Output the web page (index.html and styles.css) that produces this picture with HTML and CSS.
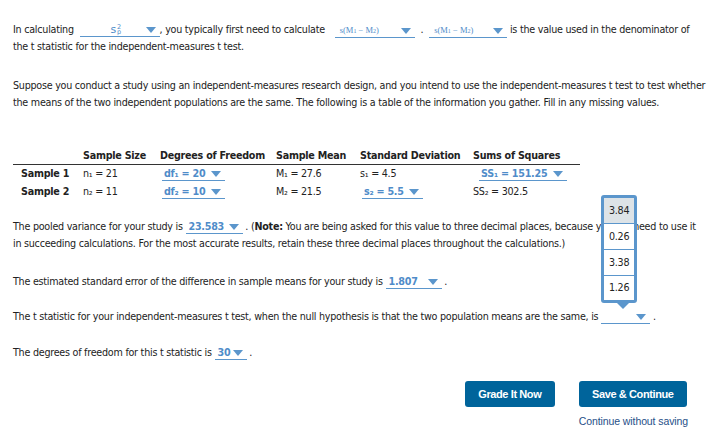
FILE: index.html
```html
<!DOCTYPE html>
<html>
<head>
<meta charset="utf-8">
<link rel="stylesheet" href="styles.css">
</head>
<body>
<div class="page">
  <p class="para first">In calculating <span class="dd w80 ml"><span class="val sp"><span class="s">s</span><span class="supsub"><span class="sup">2</span><span class="sub">p</span></span></span><span class="caret"></span></span>, you typically first need to calculate <span class="dd w80 ml2"><span class="val serif">s(M<small>1</small> &minus; M<small>2</small>)</span><span class="caret"></span></span> <span class="dot">.</span> <span class="dd w78"><span class="val serif">s(M<small>1</small> &minus; M<small>2</small>)</span><span class="caret"></span></span> is the value used in the denominator of<br>the t statistic for the independent-measures t test.</p>

  <p class="para second">Suppose you conduct a study using an independent-measures research design, and you intend to use the independent-measures t test to test whether<br>the means of the two independent populations are the same. The following is a table of the information you gather. Fill in any missing values.</p>

  <table class="data">
    <thead>
      <tr>
        <th class="c0"></th>
        <th class="c1">Sample Size</th>
        <th class="c2">Degrees of Freedom</th>
        <th class="c3">Sample Mean</th>
        <th class="c4">Standard Deviation</th>
        <th class="c5">Sums of Squares</th>
      </tr>
    </thead>
    <tbody>
      <tr>
        <td class="rowh">Sample 1</td>
        <td>n&#8321; = 21</td>
        <td><span class="dd tb w63"><span class="val">df&#8321; = 20</span><span class="caret"></span></span></td>
        <td>M&#8321; = 27.6</td>
        <td>s&#8321; = 4.5</td>
        <td><span class="dd tb w88 ss"><span class="val">SS&#8321; = 151.25</span><span class="caret"></span></span></td>
      </tr>
      <tr>
        <td class="rowh">Sample 2</td>
        <td>n&#8322; = 11</td>
        <td><span class="dd tb w63"><span class="val">df&#8322; = 10</span><span class="caret"></span></span></td>
        <td>M&#8322; = 21.5</td>
        <td><span class="dd tb w61"><span class="val">s&#8322; = 5.5</span><span class="caret"></span></span></td>
        <td>SS&#8322; = 302.5</td>
      </tr>
    </tbody>
  </table>

  <p class="para pooled">The pooled variance for your study is <span class="dd w57"><span class="val">23.583</span><span class="caret"></span></span> . (<b>Note:</b> You are being asked for this value to three decimal places, because you will need to use it<br>in succeeding calculations. For the most accurate results, retain these three decimal places throughout the calculations.)</p>

  <p class="para se">The estimated standard error of the difference in sample means for your study is <span class="dd w56"><span class="val">1.807</span><span class="caret"></span></span> .</p>

  <p class="para tstat">The t statistic for your independent-measures t test, when the null hypothesis is that the two population means are the same, is <span class="dd w49 open"><span class="val">&nbsp;</span><span class="caret"></span><span class="menu"><span class="opt hl">3.84</span><span class="opt">0.26</span><span class="opt">3.38</span><span class="opt last">1.26</span><span class="tip"></span></span></span> .</p>

  <p class="para dfp">The degrees of freedom for this t statistic is <span class="dd w32"><span class="val">30</span><span class="caret"></span></span> .</p>

  <div class="actions">
    <button class="btn grade">Grade It Now</button>
    <div class="savecol">
      <button class="btn save">Save &amp; Continue</button>
      <a class="skip">Continue without saving</a>
    </div>
  </div>
</div>
</body>
</html>
```

FILE: styles.css
```css
html, body {
  margin: 0;
  padding: 0;
  background: #ffffff;
}
.page {
  padding: 21px 2px 0 13px;
  font-family: "DejaVu Sans", Verdana, sans-serif;
  font-size: 9.6px;
  color: #222222;
  letter-spacing: -0.25px;
  white-space: nowrap;
}
.para {
  margin: 0;
  line-height: 17px;
}
.para + .para {
  margin-top: 20px;
}
.para.first + .para.second {
  margin-top: 22px;
}
.para.pooled + .para.se {
  margin-top: 21px;
}
.para.se + .para.tstat {
  margin-top: 18px;
}
.para.tstat + .para.dfp {
  margin-top: 19px;
}

.dd {
  display: inline-flex;
  align-items: center;
  justify-content: space-between;
  position: relative;
  border-bottom: 1px solid #5b96cc;
  color: #4f8cc9;
  font-weight: bold;
  height: 13px;
  line-height: 12px;
  padding: 0 4px 0 3px;
  vertical-align: baseline;
  box-sizing: border-box;
}
.dd .val {
  flex: 1;
  text-align: left;
}
.dd .caret {
  flex: none;
  width: 0;
  height: 0;
  border-left: 5px solid transparent;
  border-right: 5px solid transparent;
  border-top: 6px solid #5b96cc;
  margin-left: 3px;
}
.ml { margin-left: 3px; }
.ml2 { margin-left: 7px; }
.dot { margin: 0 3px; }
.w80 { width: 80px; }
.w78 { width: 78px; }
.w63 { width: 63px; }
.w88 { width: 88px; }
.w61 { width: 61px; }
.w57 { width: 57px; }
.w56 { width: 56px; }
.w49 { width: 49px; }
.w32 { width: 32px; }

.dd .val.sp {
  display: inline-flex;
  justify-content: center;
  align-items: center;
  font-weight: normal;
  color: #4f8cc9;
  padding-left: 6px;
}
.sp .s { font-size: 11px; }
.supsub {
  display: inline-flex;
  flex-direction: column;
  font-size: 6.5px;
  line-height: 5px;
  margin-left: 1px;
}
.dd .val.serif {
  font-family: "Liberation Serif", serif;
  font-weight: normal;
  font-size: 8.5px;
  padding-left: 2px;
  letter-spacing: 0;
}
.serif small { font-size: 6px; }

.data {
  border-collapse: collapse;
  margin-top: 38px;
  width: 567px;
}
.data th {
  font-weight: bold;
  text-align: left;
  padding: 0 0 2px 0;
  border-bottom: 1px solid #333333;
  line-height: 13px;
}
.data td {
  padding: 0;
  height: 18px;
  line-height: 16px;
}
.data td.rowh {
  font-weight: bold;
  padding-left: 8px;
}
.c0 { width: 70px; }
.c1 { width: 77px; }
.c2 { width: 116px; }
.c3 { width: 84px; }
.c4 { width: 113px; }
.dd.tb { padding-left: 2px; margin-left: 2px; }
.dd.ss { margin-left: 6px; }

.data + .para {
  margin-top: 17px;
}

.menu {
  position: absolute;
  left: 0;
  bottom: 20px;
  width: 36px;
  box-sizing: border-box;
  border: 3px solid #5b96cc;
  border-radius: 3px;
  background: #ffffff;
  display: flex;
  flex-direction: column;
  font-weight: normal;
  color: #222222;
  line-height: 25px;
}
.opt {
  height: 25px;
  text-align: center;
  border-bottom: 1px solid #5b96cc;
}
.opt.hl { background: #dde3e7; }
.opt.last { border-bottom: none; height: 24px; line-height: 24px; }
.tip {
  position: absolute;
  left: 13px;
  bottom: -9px;
  width: 0;
  height: 0;
  border-left: 6px solid transparent;
  border-right: 6px solid transparent;
  border-top: 6px solid #5b96cc;
}

.actions {
  display: flex;
  justify-content: flex-end;
  align-items: flex-start;
  gap: 24px;
  margin-top: 20px;
  padding-right: 24px;
}
.btn {
  background: #00649b;
  color: #ffffff;
  border: none;
  border-radius: 3px;
  font-family: "Liberation Sans", Arial, sans-serif;
  font-weight: bold;
  font-size: 11px;
  letter-spacing: -0.4px;
  height: 26px;
  padding: 0;
  flex: none;
}
.grade { width: 90px; }
.save { width: 108px; }
.savecol {
  display: flex;
  flex-direction: column;
  align-items: flex-start;
}
.skip {
  margin-top: 8px;
  font-family: "Liberation Sans", Arial, sans-serif;
  font-size: 10.5px;
  color: #1f4f88;
  letter-spacing: -0.1px;
}
```
